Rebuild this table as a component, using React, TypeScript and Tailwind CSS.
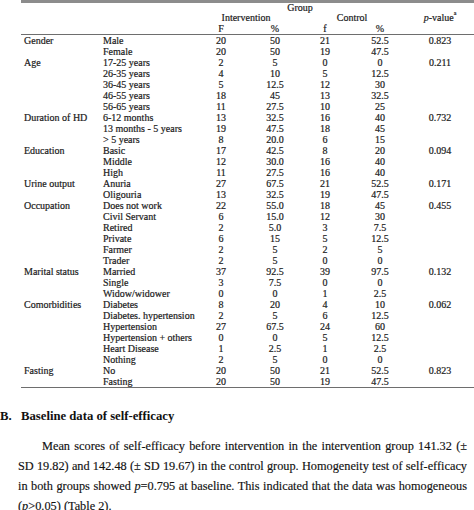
import React from "react";

type Row = [string, string, string, string, string, string, string];

const rows: Row[] = [
  ["Gender", "Male", "20", "50", "21", "52.5", "0.823"],
  ["", "Female", "20", "50", "19", "47.5", ""],
  ["Age", "17-25 years", "2", "5", "0", "0", "0.211"],
  ["", "26-35 years", "4", "10", "5", "12.5", ""],
  ["", "36-45 years", "5", "12.5", "12", "30", ""],
  ["", "46-55 years", "18", "45", "13", "32.5", ""],
  ["", "56-65 years", "11", "27.5", "10", "25", ""],
  ["Duration of HD", "6-12 months", "13", "32.5", "16", "40", "0.732"],
  ["", "13 months - 5 years", "19", "47.5", "18", "45", ""],
  ["", "> 5 years", "8", "20.0", "6", "15", ""],
  ["Education", "Basic", "17", "42.5", "8", "20", "0.094"],
  ["", "Middle", "12", "30.0", "16", "40", ""],
  ["", "High", "11", "27.5", "16", "40", ""],
  ["Urine output", "Anuria", "27", "67.5", "21", "52.5", "0.171"],
  ["", "Oligouria", "13", "32.5", "19", "47.5", ""],
  ["Occupation", "Does not work", "22", "55.0", "18", "45", "0.455"],
  ["", "Civil Servant", "6", "15.0", "12", "30", ""],
  ["", "Retired", "2", "5.0", "3", "7.5", ""],
  ["", "Private", "6", "15", "5", "12.5", ""],
  ["", "Farmer", "2", "5", "2", "5", ""],
  ["", "Trader", "2", "5", "0", "0", ""],
  ["Marital status", "Married", "37", "92.5", "39", "97.5", "0.132"],
  ["", "Single", "3", "7.5", "0", "0", ""],
  ["", "Widow/widower", "0", "0", "1", "2.5", ""],
  ["Comorbidities", "Diabetes", "8", "20", "4", "10", "0.062"],
  ["", "Diabetes. hypertension", "2", "5", "6", "12.5", ""],
  ["", "Hypertension", "27", "67.5", "24", "60", ""],
  ["", "Hypertension + others", "0", "0", "5", "12.5", ""],
  ["", "Heart Disease", "1", "2.5", "1", "2.5", ""],
  ["", "Nothing", "2", "5", "0", "0", ""],
  ["Fasting", "No", "20", "50", "21", "52.5", "0.823"],
  ["", "Fasting", "20", "50", "19", "47.5", ""],
];

const grid = "grid grid-cols-[79px_100px_42px_66px_34px_76px_44px]";

export default function App() {
  return (
    <div
      className="w-[474px] h-[510px] overflow-hidden bg-white text-[#1e1e1e]"
      style={{ fontFamily: '"Liberation Serif", "Times New Roman", serif' }}
    >
      {/* Table */}
      <div className="ml-[21px] text-[10px] leading-[11px] text-[#1a1a1a] [-webkit-text-stroke:0.2px_#1a1a1a]">
        <div className="h-[2.5px] bg-[#8c8c8c]" />
        <div className={grid + " h-[9px] leading-[9px]"}>
          <div className="col-start-3 col-span-4 text-center pr-[18px]">Group</div>
        </div>
        <div className={grid + " h-[11px]"}>
          <div className="col-start-3 col-span-2 text-center pr-[16px]">Intervention</div>
          <div className="col-span-2 text-center pr-[22px]">Control</div>
          <div className="text-center">
            <i>p</i>-value<sup className="text-[6px] align-[3px]">a</sup>
          </div>
        </div>
        <div className={grid + " h-[11px]"}>
          <div className="col-start-3 text-center">F</div>
          <div className="text-center">%</div>
          <div className="text-center">f</div>
          <div className="text-center">%</div>
        </div>
        <div className="h-px bg-[#6e6e6e]" />
        <div>
          {rows.map((r, i) => (
            <div key={i} className={grid + " h-[11px] whitespace-nowrap"}>
              <div className="pl-[3px]">{r[0]}</div>
              <div className="pl-[3px]">{r[1]}</div>
              <div className="text-center">{r[2]}</div>
              <div className="text-center">{r[3]}</div>
              <div className="text-center">{r[4]}</div>
              <div className="text-center">{r[5]}</div>
              <div className="text-center">{r[6]}</div>
            </div>
          ))}
        </div>
        <div className="h-[1.5px] bg-[#6e6e6e]" />
      </div>

      {/* Section heading */}
      <div className="mt-[19px] flex h-[20px] items-center text-[12.7px] font-bold text-[#111]">
        <span className="w-[21px] shrink-0">B.</span>
        <span>Baseline data of self-efficacy</span>
      </div>

      {/* Paragraph */}
      <div className="mt-[9px] ml-[18px] w-[449px] text-[12.3px] leading-[20px] text-[#111] [-webkit-text-stroke:0.15px_#111]">
        <div className="pl-[24px] text-justify [text-align-last:justify] whitespace-nowrap">
          Mean scores of self-efficacy before intervention in the intervention group 141.32 (±
        </div>
        <div className="text-justify [text-align-last:justify] whitespace-nowrap">
          SD 19.82) and 142.48 (± SD 19.67) in the control group. Homogeneity test of self-efficacy
        </div>
        <div className="text-justify [text-align-last:justify] whitespace-nowrap">
          in both groups showed <i>p</i>=0.795 at baseline. This indicated that the data was homogeneous
        </div>
        <div className="whitespace-nowrap">
          (<i>p</i>&gt;0.05) (Table 2).
        </div>
      </div>
    </div>
  );
}
